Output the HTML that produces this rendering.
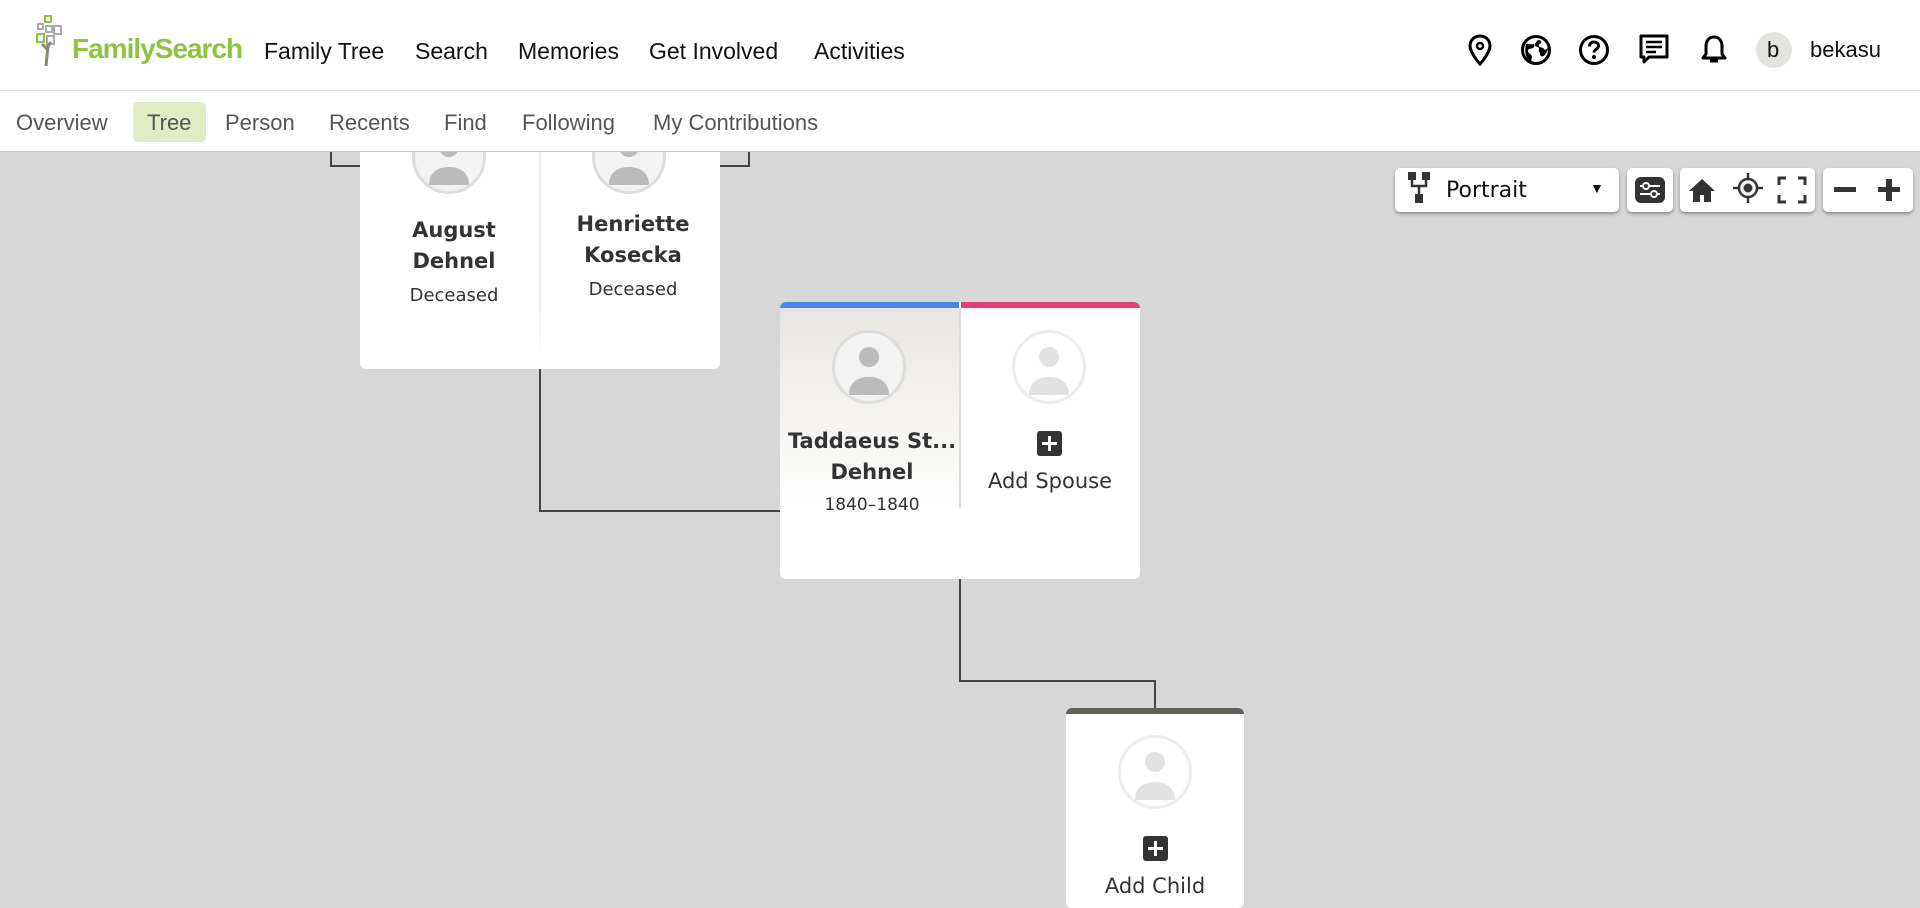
<!DOCTYPE html>
<html><head><meta charset="utf-8"><style>
*{margin:0;padding:0;box-sizing:border-box}
body{width:1920px;height:880px;overflow:hidden;background:#d7d7d7;font-family:"Liberation Sans",sans-serif;position:relative}
.hdr{position:absolute;left:0;top:0;width:1920px;height:91px;background:#fff;border-bottom:1px solid #e2e2e2;z-index:10}
.sub{position:absolute;left:0;top:91px;width:1920px;height:61px;background:#fff;border-bottom:1px solid #ccc;z-index:10}
.t{position:absolute;white-space:nowrap}
.top{z-index:11}
.nav{font-size:23px;color:#111;top:38px;z-index:11}
.sn{font-size:22px;color:#555;top:110px;z-index:11}
.card{position:absolute;background:#fff;border-radius:6px}
.d{font-family:"DejaVu Sans",sans-serif;color:#333;text-align:center;position:absolute;white-space:nowrap}
.nm{font-weight:bold;font-size:21px;line-height:31px}
.av{position:absolute;width:74px;height:74px;border-radius:50%;border:3px solid #ddd;background:#f3f3f3;overflow:hidden}
.ln{position:absolute;background:#444}
.ctl{position:absolute;background:#fff;border-radius:5px;box-shadow:0 2px 3px rgba(0,0,0,.35);top:168px;height:44px}
.plus{position:absolute;width:25px;height:25px;background:#333;border-radius:3px}
.plus:before{content:"";position:absolute;left:5px;top:11px;width:15px;height:3px;background:#fff}
.plus:after{content:"";position:absolute;left:11px;top:5px;width:3px;height:15px;background:#fff}
</style></head><body>
<div class="hdr"></div>
<div class="sub"></div>
<!-- logo -->
<svg class="top" style="position:absolute;left:36px;top:14px" width="50" height="54" viewBox="0 0 50 54">
<rect x="9" y="2" width="6" height="6" fill="none" stroke="#8cc63f" stroke-width="2"/>
<rect x="2" y="10" width="5" height="5" fill="none" stroke="#aaa" stroke-width="2"/>
<rect x="10" y="12" width="6" height="6" fill="none" stroke="#aaa" stroke-width="2"/>
<rect x="18" y="12" width="7" height="8" fill="none" stroke="#aaa" stroke-width="2"/>
<rect x="1" y="20" width="7" height="8" fill="none" stroke="#8cc63f" stroke-width="2"/>
<rect x="11" y="22" width="7" height="8" fill="none" stroke="#aaa" stroke-width="2"/>
<path d="M10 52 L12 32 L15 28 M12 36 L6 30" stroke="#8f8577" stroke-width="3" fill="none"/>
</svg>
<div class="t top" style="left:72px;top:33px;font-size:28px;font-weight:bold;color:#8cc63f;letter-spacing:-1px">FamilySearch</div>
<div class="t nav" style="left:264px">Family Tree</div>
<div class="t nav" style="left:415px">Search</div>
<div class="t nav" style="left:518px">Memories</div>
<div class="t nav" style="left:649px">Get Involved</div>
<div class="t nav" style="left:814px">Activities</div>
<!-- icons -->
<svg class="top" style="position:absolute;left:1466px;top:34px" width="28" height="32" viewBox="0 0 28 32"><path d="M14 2C8 2 4 6.5 4 12c0 7 10 18 10 18s10-11 10-18c0-5.5-4-10-10-10z" fill="none" stroke="#000" stroke-width="3"/><circle cx="14" cy="12" r="3" fill="none" stroke="#000" stroke-width="2.5"/></svg>
<svg class="top" style="position:absolute;left:1520px;top:34px" width="32" height="32" viewBox="0 0 32 32"><circle cx="16" cy="16" r="13.5" fill="none" stroke="#000" stroke-width="3"/><path d="M6 10c3-1 5 1 7 0s2 3 0 4-5 0-5 3 4 3 4 6l-1 5C6 25 4 18 6 10zM18 6c3 0 4 2 3 3s-3 1-2 3 4 1 5 3 3 0 4-2c0 4-2 6-4 9-2 1-4 0-4-2s-2-3-1-5-4-2-4-4 2-4 3-5z" fill="#000"/></svg>
<svg class="top" style="position:absolute;left:1578px;top:34px" width="32" height="32" viewBox="0 0 32 32"><circle cx="16" cy="16" r="13.5" fill="none" stroke="#000" stroke-width="3"/><path d="M11.5 12.5c0-3 2-4.5 4.5-4.5s4.5 1.5 4.5 4c0 3-4.5 3.5-4.5 6.5" fill="none" stroke="#000" stroke-width="3"/><circle cx="16" cy="23" r="2" fill="#000"/></svg>
<svg class="top" style="position:absolute;left:1638px;top:33px" width="32" height="32" viewBox="0 0 32 32"><path d="M3 3h26v21H11l-5 5v-5H3z" fill="none" stroke="#000" stroke-width="3" stroke-linejoin="round"/><path d="M8 9h16M8 14h16M8 19h10" stroke="#000" stroke-width="2.5"/></svg>
<svg class="top" style="position:absolute;left:1699px;top:34px" width="30" height="32" viewBox="0 0 30 32"><path d="M15 3c-5 0-8 4-8 9v8l-3 4h22l-3-4v-8c0-5-3-9-8-9z" fill="none" stroke="#000" stroke-width="3" stroke-linejoin="round"/><path d="M11 27h8" stroke="#000" stroke-width="3"/></svg>
<div class="top" style="position:absolute;left:1756px;top:32px;width:36px;height:36px;border-radius:50%;background:#e4e4df"></div>
<div class="t top" style="left:1767px;top:37px;font-size:22px;color:#111">b</div>
<div class="t top" style="left:1810px;top:37px;font-size:22px;color:#111">bekasu</div>
<!-- subnav -->
<div class="top" style="position:absolute;left:133px;top:102px;width:73px;height:40px;background:#e1ebc6;border-radius:5px"></div>
<div class="t sn" style="left:16px">Overview</div>
<div class="t sn" style="left:147px">Tree</div>
<div class="t sn" style="left:225px">Person</div>
<div class="t sn" style="left:329px">Recents</div>
<div class="t sn" style="left:444px">Find</div>
<div class="t sn" style="left:522px">Following</div>
<div class="t sn" style="left:653px">My Contributions</div>
<!-- lines -->
<div class="ln" style="left:330px;top:152px;width:2px;height:15px"></div>
<div class="ln" style="left:330px;top:165px;width:35px;height:2px"></div>
<div class="ln" style="left:748px;top:152px;width:2px;height:15px"></div>
<div class="ln" style="left:715px;top:165px;width:35px;height:2px"></div>
<div class="ln" style="left:539px;top:369px;width:2px;height:143px"></div>
<div class="ln" style="left:539px;top:510px;width:242px;height:2px"></div>
<div class="ln" style="left:959px;top:579px;width:2px;height:102px"></div>
<div class="ln" style="left:959px;top:680px;width:197px;height:2px"></div>
<div class="ln" style="left:1154px;top:680px;width:2px;height:30px"></div>
<!-- top couple card -->
<div class="card" style="left:360px;top:140px;width:360px;height:229px;border-radius:0 0 6px 6px"></div>
<div style="position:absolute;left:539px;top:152px;width:2px;height:200px;background:linear-gradient(#eee,#eee 80%,#fff)"></div>
<div class="av" style="left:412px;top:120px"><svg width="68" height="68" viewBox="0 0 68 68"><circle cx="34" cy="24" r="10" fill="#bbb"/><path d="M14 62c0-12 8-18 20-18s20 6 20 18z" fill="#bbb"/></svg></div>
<div class="av" style="left:592px;top:120px"><svg width="68" height="68" viewBox="0 0 68 68"><circle cx="34" cy="24" r="10" fill="#bbb"/><path d="M14 62c0-12 8-18 20-18s20 6 20 18z" fill="#bbb"/></svg></div>
<div class="d nm" style="left:360px;width:188px;top:215px">August<br>Dehnel</div>
<div class="d" style="left:360px;width:188px;top:285px;font-size:18px">Deceased</div>
<div class="d nm" style="left:543px;width:180px;top:209px">Henriette<br>Kosecka</div>
<div class="d" style="left:543px;width:180px;top:279px;font-size:18px">Deceased</div>
<!-- main card -->
<div class="card" style="left:780px;top:302px;width:360px;height:277px;overflow:hidden">
 <div style="position:absolute;left:0;top:0;width:179px;height:6px;background:#4a86e8"></div>
 <div style="position:absolute;left:181px;top:0;width:179px;height:6px;background:#e0407a"></div>
 <div style="position:absolute;left:0;top:6px;width:179px;height:200px;background:linear-gradient(#e8e6e1,#fff)"></div>
 <div style="position:absolute;left:179px;top:6px;width:2px;height:200px;background:#ddd"></div>
</div>
<div class="av" style="left:832px;top:330px"><svg width="68" height="68" viewBox="0 0 68 68"><circle cx="34" cy="24" r="10" fill="#bbb"/><path d="M14 62c0-12 8-18 20-18s20 6 20 18z" fill="#bbb"/></svg></div>
<div class="av" style="left:1012px;top:330px;border-color:#eee;background:#fff"><svg width="68" height="68" viewBox="0 0 68 68"><circle cx="34" cy="24" r="10" fill="#e2e2e2"/><path d="M14 62c0-12 8-18 20-18s20 6 20 18z" fill="#e2e2e2"/></svg></div>
<div class="d nm" style="left:782px;width:180px;top:426px">Taddaeus St...<br>Dehnel</div>
<div class="d" style="left:782px;width:180px;top:495px;font-size:17px">1840–1840</div>
<div class="plus" style="left:1037px;top:431px"></div>
<div class="d" style="left:960px;width:180px;top:469px;font-size:21px">Add Spouse</div>
<!-- child card -->
<div class="card" style="left:1066px;top:708px;width:178px;height:200px;overflow:hidden"><div style="height:6px;background:#5f5f5a"></div></div>
<div class="av" style="left:1118px;top:735px;border-color:#eee;background:#fff"><svg width="68" height="68" viewBox="0 0 68 68"><circle cx="34" cy="24" r="10" fill="#e2e2e2"/><path d="M14 62c0-12 8-18 20-18s20 6 20 18z" fill="#e2e2e2"/></svg></div>
<div class="plus" style="left:1143px;top:836px"></div>
<div class="d" style="left:1066px;width:178px;top:874px;font-size:21px">Add Child</div>
<!-- controls -->
<div class="ctl" style="left:1395px;width:224px"></div>
<svg style="position:absolute;left:1408px;top:172px" width="24" height="32" viewBox="0 0 24 32"><rect x="0" y="0" width="8" height="8" fill="#333"/><rect x="14" y="0" width="8" height="8" fill="#333"/><rect x="7" y="22" width="8" height="9" fill="#333"/><path d="M4 8v6h14V8M11 14v8" stroke="#333" stroke-width="2.5" fill="none"/></svg>
<div class="t" style="left:1446px;top:178px;font-size:22px;color:#111;font-family:'DejaVu Sans',sans-serif">Portrait</div>
<div class="t" style="left:1590px;top:180px;font-size:14px;color:#111">▼</div>
<div class="ctl" style="left:1627px;width:46px"></div>
<svg style="position:absolute;left:1634px;top:176px" width="32" height="28" viewBox="0 0 32 28"><rect x="1" y="1" width="30" height="26" rx="6" fill="#333"/><path d="M6 10h20M6 18h20" stroke="#fff" stroke-width="2"/><circle cx="12" cy="10" r="3" fill="#333" stroke="#fff" stroke-width="2"/><circle cx="20" cy="18" r="3" fill="#333" stroke="#fff" stroke-width="2"/></svg>
<div class="ctl" style="left:1680px;width:135px"></div>
<svg style="position:absolute;left:1688px;top:177px" width="28" height="26" viewBox="0 0 28 26"><path d="M14 2L1 14h4v11h7v-7h4v7h7V14h4z" fill="#333"/></svg>
<svg style="position:absolute;left:1733px;top:173px" width="30" height="30" viewBox="0 0 30 30"><circle cx="15" cy="15" r="9" fill="none" stroke="#333" stroke-width="2.5"/><circle cx="15" cy="15" r="4.5" fill="#333"/><path d="M15 0v6M15 24v6M0 15h6M24 15h6" stroke="#333" stroke-width="2.5"/></svg>
<svg style="position:absolute;left:1777px;top:176px" width="30" height="28" viewBox="0 0 30 28"><path d="M2 9V2h7M21 2h7v7M28 19v7h-7M9 26H2v-7" stroke="#333" stroke-width="3" fill="none"/></svg>
<div class="ctl" style="left:1823px;width:90px"></div>
<div style="position:absolute;left:1834px;top:187px;width:22px;height:5px;background:#333"></div>
<div style="position:absolute;left:1878px;top:187px;width:22px;height:5px;background:#333"></div>
<div style="position:absolute;left:1886px;top:179px;width:6px;height:22px;background:#333"></div>
</body></html>
